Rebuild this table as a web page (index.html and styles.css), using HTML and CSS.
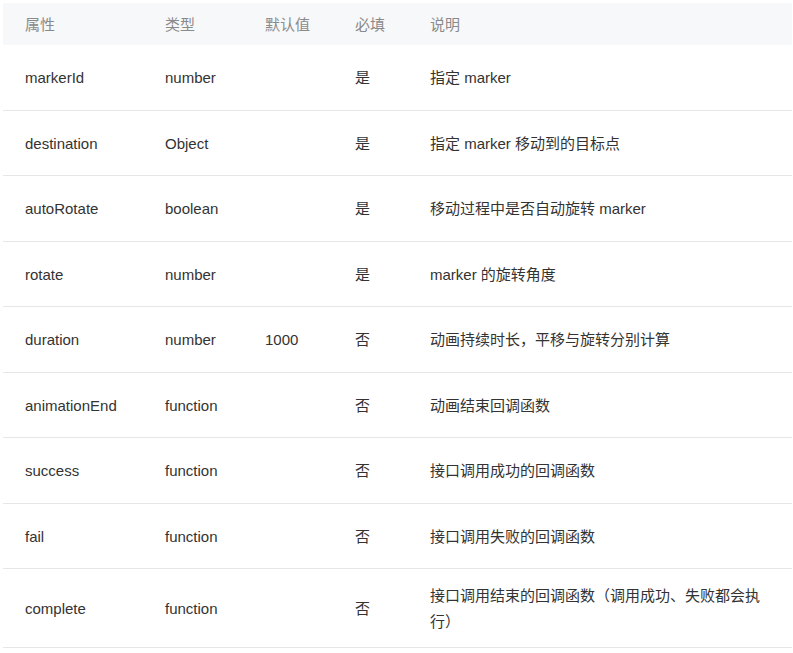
FILE: index.html
```html
<!DOCTYPE html>
<html>
<head>
<meta charset="utf-8">
<link rel="stylesheet" href="styles.css">
</head>
<body>
<table class="props">
  <thead>
    <tr><th class="c1">属性</th><th class="c2">类型</th><th class="c3">默认值</th><th class="c4">必填</th><th class="c5">说明</th></tr>
  </thead>
  <tbody>
    <tr><td>markerId</td><td>number</td><td></td><td>是</td><td>指定 marker</td></tr>
    <tr><td>destination</td><td>Object</td><td></td><td>是</td><td>指定 marker 移动到的目标点</td></tr>
    <tr><td>autoRotate</td><td>boolean</td><td></td><td>是</td><td>移动过程中是否自动旋转 marker</td></tr>
    <tr><td>rotate</td><td>number</td><td></td><td>是</td><td>marker 的旋转角度</td></tr>
    <tr><td>duration</td><td>number</td><td>1000</td><td>否</td><td>动画持续时长，平移与旋转分别计算</td></tr>
    <tr><td>animationEnd</td><td>function</td><td></td><td>否</td><td>动画结束回调函数</td></tr>
    <tr><td>success</td><td>function</td><td></td><td>否</td><td>接口调用成功的回调函数</td></tr>
    <tr><td>fail</td><td>function</td><td></td><td>否</td><td>接口调用失败的回调函数</td></tr>
    <tr><td>complete</td><td>function</td><td></td><td>否</td><td>接口调用结束的回调函数（调用成功、失败都会执行）</td></tr>
  </tbody>
</table>
</body>
</html>
```
FILE: styles.css
```css
html, body {
  margin: 0;
  background: #ffffff;
}
body {
  padding: 3px 1px 0 3px;
  font-family: "Liberation Sans", "Noto Sans CJK SC", sans-serif;
  font-size: 15px;
  color: #333333;
  text-spacing-trim: space-all;
}
.props {
  width: 789px;
  border-collapse: collapse;
  table-layout: fixed;
}
.props th {
  background: #f7f8fa;
  color: #8a8a8a;
  font-weight: normal;
  text-align: left;
  height: 42px;
  padding: 1px 0 0 22px;
  line-height: 20px;
  box-sizing: border-box;
  vertical-align: middle;
}
.props .c1 { width: 140px; }
.props .c2 { width: 100px; }
.props .c3 { width: 90px; }
.props .c4 { width: 75px; }
.props td {
  padding: 14px 0 12px 22px;
  line-height: 26px;
  height: 38.5px;
  vertical-align: middle;
  border-bottom: 1px solid #e6e6e6;
  word-break: break-all;
}
.props td:last-child {
  padding-right: 18px;
}
```
